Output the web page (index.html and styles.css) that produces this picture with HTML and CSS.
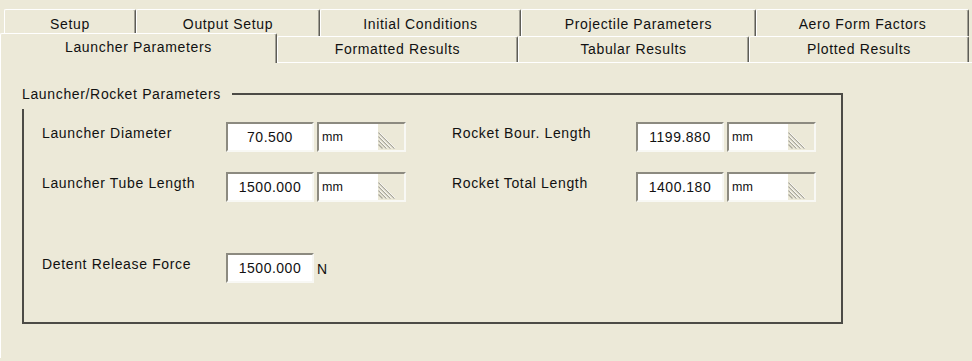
FILE: index.html
```html
<!DOCTYPE html>
<html lang="en">
<head>
    <meta charset="UTF-8">
    <title>Launcher Parameters</title>
    <link rel="stylesheet" href="styles.css">
</head>
<body>
    <div class="tabs">
        <!-- riga superiore delle schede -->
        <div class="tab-row row-top">
            <div class="tab t-setup">Setup</div>
            <div class="tab t-output">Output Setup</div>
            <div class="tab t-initial">Initial Conditions</div>
            <div class="tab t-projectile">Projectile Parameters</div>
            <div class="tab t-aero">Aero Form Factors</div>
        </div>
        <!-- riga inferiore, con la scheda attiva -->
        <div class="tab-row row-bottom">
            <div class="tab t-launcher active">Launcher Parameters</div>
            <div class="tab t-formatted">Formatted Results</div>
            <div class="tab t-tabular">Tabular Results</div>
            <div class="tab t-plotted">Plotted Results</div>
        </div>
    </div>

    <div class="panel">
        <div class="group">
            <div class="group-head">
                <span class="group-title">Launcher/Rocket Parameters</span>
                <span class="group-rule"></span>
            </div>
            <div class="group-body">
                <div class="row">
                    <div class="field">
                        <span class="label">Launcher Diameter</span>
                        <span class="value">70.500</span>
                        <span class="unit">
                            <span class="unit-text">mm</span>
                            <span class="unit-btn">
                                <svg width="18" height="17" viewBox="0 0 18 17">
                                    <path d="M0.5 0.5 L16.5 16.5 M0.5 4.5 L12.5 16.5 M0.5 8.5 L8.5 16.5 M0.5 12.5 L4.5 16.5" stroke="#a9a79c" stroke-width="1.2" fill="none"/>
                                    <path d="M1.5 0.5 L17 16 M1.5 4.5 L13 16 M1.5 8.5 L9 16" stroke="#ffffff" stroke-width="0.8" fill="none"/>
                                </svg>
                            </span>
                        </span>
                    </div>
                    <div class="field">
                        <span class="label">Rocket Bour. Length</span>
                        <span class="value">1199.880</span>
                        <span class="unit">
                            <span class="unit-text">mm</span>
                            <span class="unit-btn">
                                <svg width="18" height="17" viewBox="0 0 18 17">
                                    <path d="M0.5 0.5 L16.5 16.5 M0.5 4.5 L12.5 16.5 M0.5 8.5 L8.5 16.5 M0.5 12.5 L4.5 16.5" stroke="#a9a79c" stroke-width="1.2" fill="none"/>
                                    <path d="M1.5 0.5 L17 16 M1.5 4.5 L13 16 M1.5 8.5 L9 16" stroke="#ffffff" stroke-width="0.8" fill="none"/>
                                </svg>
                            </span>
                        </span>
                    </div>
                </div>

                <div class="row row-2">
                    <div class="field">
                        <span class="label">Launcher Tube Length</span>
                        <span class="value">1500.000</span>
                        <span class="unit">
                            <span class="unit-text">mm</span>
                            <span class="unit-btn">
                                <svg width="18" height="17" viewBox="0 0 18 17">
                                    <path d="M0.5 0.5 L16.5 16.5 M0.5 4.5 L12.5 16.5 M0.5 8.5 L8.5 16.5 M0.5 12.5 L4.5 16.5" stroke="#a9a79c" stroke-width="1.2" fill="none"/>
                                    <path d="M1.5 0.5 L17 16 M1.5 4.5 L13 16 M1.5 8.5 L9 16" stroke="#ffffff" stroke-width="0.8" fill="none"/>
                                </svg>
                            </span>
                        </span>
                    </div>
                    <div class="field">
                        <span class="label">Rocket Total Length</span>
                        <span class="value">1400.180</span>
                        <span class="unit">
                            <span class="unit-text">mm</span>
                            <span class="unit-btn">
                                <svg width="18" height="17" viewBox="0 0 18 17">
                                    <path d="M0.5 0.5 L16.5 16.5 M0.5 4.5 L12.5 16.5 M0.5 8.5 L8.5 16.5 M0.5 12.5 L4.5 16.5" stroke="#a9a79c" stroke-width="1.2" fill="none"/>
                                    <path d="M1.5 0.5 L17 16 M1.5 4.5 L13 16 M1.5 8.5 L9 16" stroke="#ffffff" stroke-width="0.8" fill="none"/>
                                </svg>
                            </span>
                        </span>
                    </div>
                </div>

                <div class="row row-3">
                    <div class="field">
                        <span class="label">Detent Release Force</span>
                        <span class="value">1500.000</span>
                        <span class="suffix">N</span>
                    </div>
                </div>
            </div>
        </div>
    </div>
</body>
</html>
```

FILE: styles.css
```css
/* sfondo stile finestra XP */
body {
    margin: 0;
    background-color: #ECE9D8;
    color: #111;
    font-family: "Liberation Sans", Arial, sans-serif;
    font-size: 14px;
    letter-spacing: 0.65px;
    overflow: hidden;
}

/* Schede */
.tabs {
    padding-top: 9px;
}

.tab-row {
    display: flex;
    align-items: flex-start;
}

.row-top {
    padding-left: 4px;
    height: 27px;
}

.row-bottom {
    height: 26px;
}

.tab {
    box-sizing: border-box;
    text-align: center;
    white-space: nowrap;
    background-color: #ECE9D8;
    border-top: 1px solid #fff;
    border-left: 1px solid #fff;
    border-right: 1px solid #5e5d57;
    box-shadow: inset -1px 0 #a19f94;
    border-radius: 2px 2px 0 0;
}

.row-top .tab {
    height: 27px;
    padding-top: 1px;
    line-height: 26px;
}

.row-bottom .tab {
    height: 26px;
    line-height: 25px;
}

/* scheda attiva, un po' sollevata sopra il pannello */
.row-bottom .tab.active {
    position: relative;
    z-index: 1;
    height: 30px;
    margin-top: -3px;
    line-height: 27px;
}

.t-setup { width: 132px; }
.t-output { width: 184px; }
.t-initial { width: 201px; }
.t-projectile { width: 235px; }
.t-aero { width: 213px; }

.t-launcher { width: 277px; }
.t-formatted { width: 241px; }
.t-tabular { width: 231px; }
.t-plotted { width: 220px; }

/* Pannello */
.panel {
    border-top: 1px solid #fff;
    border-left: 1px solid #fff;
    padding: 23px 0 34px 21px;
}

/* Riquadro di gruppo */
.group {
    width: 821px;
}

.group-head {
    display: flex;
    height: 23px;
}

.group-title {
    line-height: 16px;
    padding-right: 11px;
}

.group-rule {
    flex: 1;
    margin-top: 7px;
    border-top: 2px solid #4c4b46;
    border-right: 2px solid #4c4b46;
}

.group-body {
    border: 2px solid #4c4b46;
    border-top: none;
    padding: 13px 0 39px 18px;
}

.row {
    display: flex;
    gap: 46px;
    height: 30px;
}

.row-2 {
    margin-top: 20px;
}

.row-3 {
    margin-top: 51px;
}

.field {
    display: flex;
    align-items: flex-start;
}

.label {
    width: 184px;
    padding-top: 3px;
    line-height: 16px;
    white-space: nowrap;
}

/* campi incassati */
.value,
.unit {
    box-sizing: border-box;
    height: 30px;
    border: 2px solid;
    border-color: #8c8a80 #f8f8f4 #f8f8f4 #8c8a80;
}

.value {
    width: 88px;
    background-color: #fff;
    text-align: center;
    line-height: 26px;
    letter-spacing: 0.5px;
}

.unit {
    display: flex;
    width: 89px;
    margin-left: 3px;
}

.unit-text {
    flex: 1;
    background-color: #fff;
    padding-left: 3px;
    font-size: 12.5px;
    letter-spacing: 0;
    line-height: 26px;
}

.unit-btn {
    width: 26px;
    display: flex;
    align-items: flex-end;
    background-color: #ECE9D8;
}

.unit-btn svg {
    display: block;
    margin-bottom: 1px;
}

.suffix {
    margin-left: 3px;
    line-height: 30px;
    padding-top: 1px;
}
```
